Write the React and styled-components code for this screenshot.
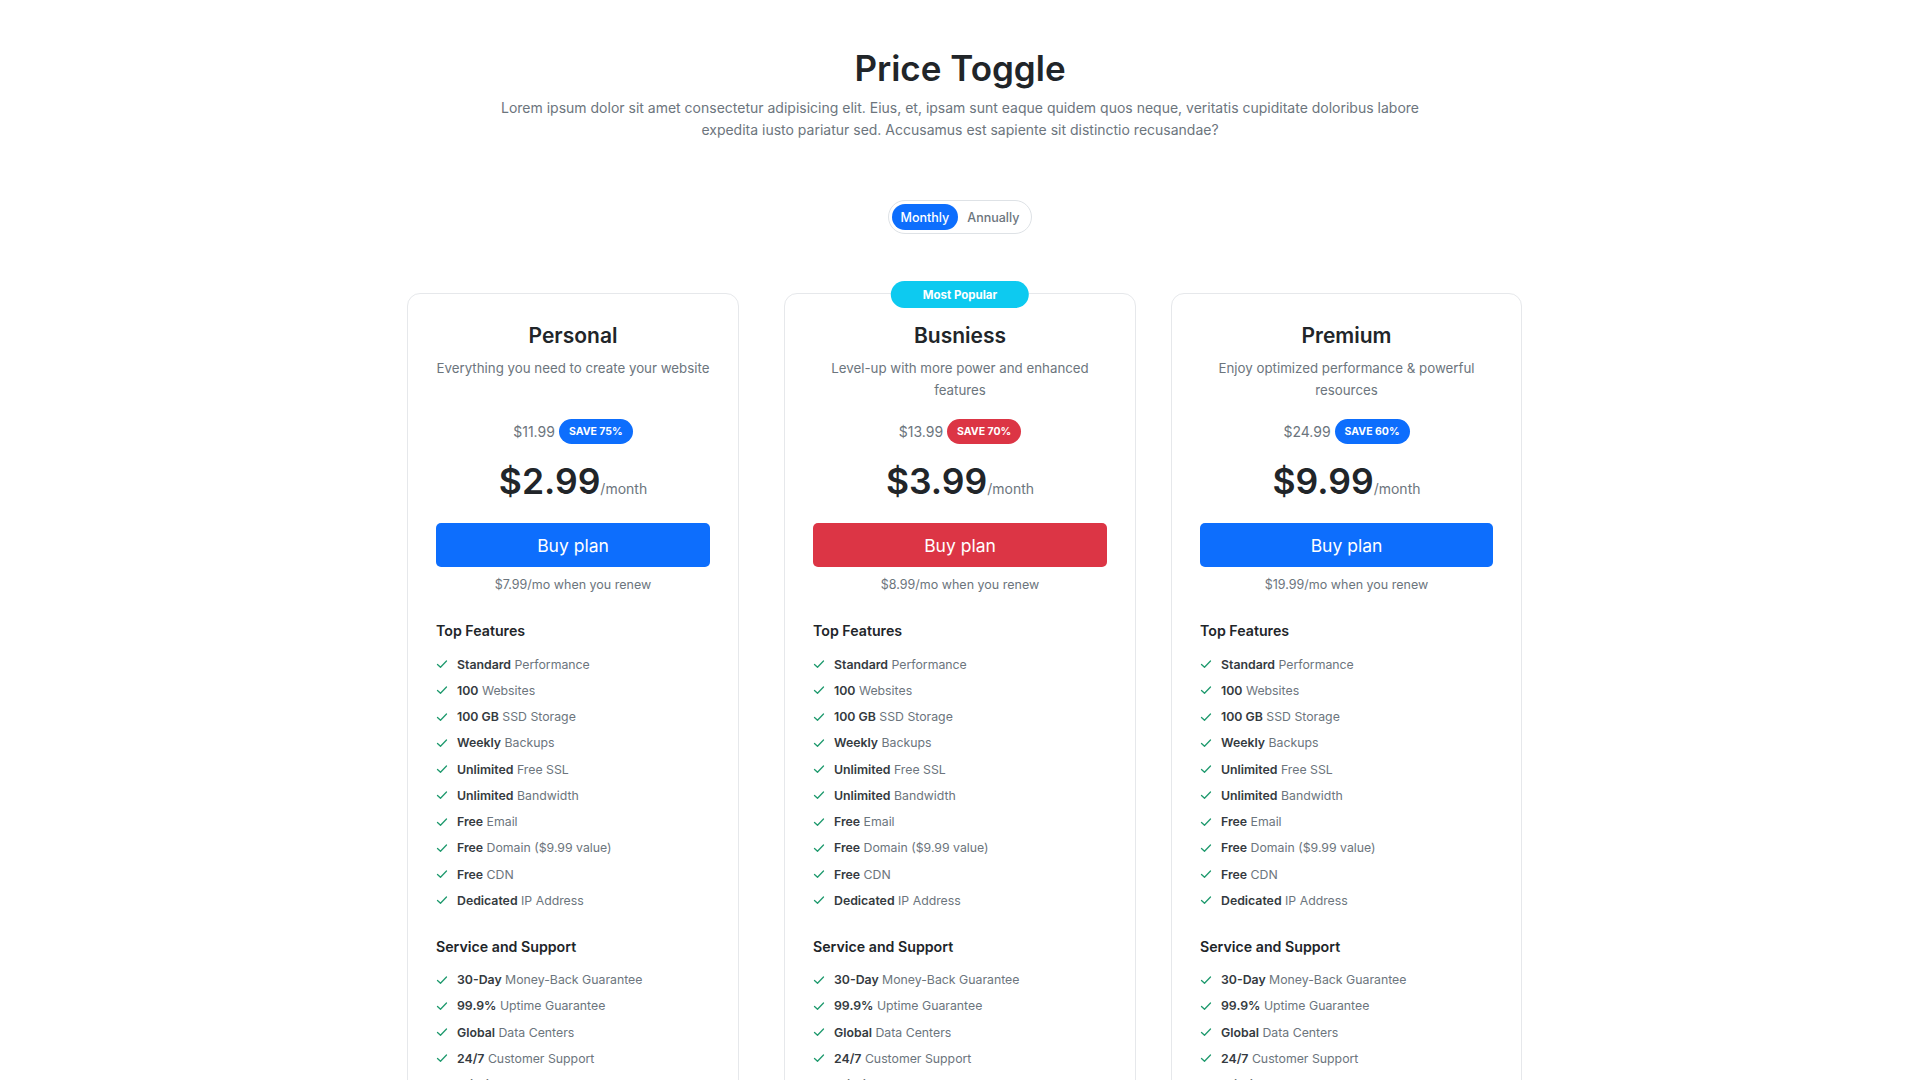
import React, { useState } from 'react'
import styled, { createGlobalStyle } from 'styled-components'

const GlobalStyle = createGlobalStyle`
    html {
        scrollbar-width: none;
    }
    html::-webkit-scrollbar {
        display: none;
    }
    body {
        margin: 0;
        background: #ffffff;
        font-family: 'Inter', 'Noto Sans', sans-serif;
        color: #212529;
    }
    * {
        box-sizing: border-box;
    }
`

const Page = styled.main`
    display: flex;
    flex-direction: column;
    align-items: center;
    padding: 47px 0 60px;
`

const Title = styled.h1`
    margin: 0;
    font-size: 35px;
    line-height: 43px;
    font-weight: 600;
    color: #212529;
`

const Lead = styled.p`
    margin: 7px 0 0;
    max-width: 960px;
    text-align: center;
    font-size: 14px;
    line-height: 22px;
    color: #6c757d;
`

const Toggle = styled.div`
    display: flex;
    margin-top: 59px;
    padding: 3px;
    border: 1px solid #dee2e6;
    border-radius: 999px;
    background: #fff;
`

const ToggleButton = styled.button`
    height: 26px;
    padding: 0 9px;
    border: 0;
    border-radius: 999px;
    font-family: inherit;
    font-size: 12.5px;
    font-weight: 500;
    cursor: pointer;
    background: ${p => (p.$active ? '#0d6efd' : 'transparent')};
    color: ${p => (p.$active ? '#ffffff' : '#6c757d')};
`

const Cards = styled.section`
    display: flex;
    justify-content: center;
    align-items: flex-start;
    margin-top: 59px;
    padding-left: 9px;
`

const Card = styled.article`
    position: relative;
    width: ${p => p.$width}px;
    margin: ${p => (p.$featured ? '0 35px 0 45px' : '0')};
    padding: 29px 28px 40px;
    border: 1px solid #e6e8eb;
    border-radius: 13px;
    background: #fff;
`

const Ribbon = styled.span`
    position: absolute;
    top: -13px;
    left: 50%;
    transform: translateX(-50%);
    height: 27px;
    padding: 0 32px;
    display: flex;
    align-items: center;
    border-radius: 999px;
    background: #0dcaf0;
    color: #fff;
    font-size: 11.5px;
    font-weight: 700;
    white-space: nowrap;
`

const PlanName = styled.h2`
    margin: 0;
    text-align: center;
    font-size: 21px;
    line-height: 26px;
    font-weight: 600;
    color: #212529;
`

const PlanText = styled.p`
    margin: 8px 0 0;
    min-height: 44px;
    text-align: center;
    font-size: 13.3px;
    line-height: 22px;
    color: #6c757d;
`

const OldPriceRow = styled.div`
    display: flex;
    justify-content: center;
    align-items: center;
    gap: 4px;
    margin-top: 18px;
    height: 25px;
`

const OldPrice = styled.span`
    font-size: 14px;
    color: #6c757d;
`

const SaveBadge = styled.span`
    height: 25px;
    padding: 0 10px;
    display: flex;
    align-items: center;
    border-radius: 999px;
    background: ${p => p.$color};
    color: #fff;
    font-size: 10.5px;
    font-weight: 700;
`

const PriceRow = styled.div`
    display: flex;
    justify-content: center;
    align-items: baseline;
    margin-top: 16px;
    height: 44px;
`

const Price = styled.span`
    font-size: 35.5px;
    line-height: 44px;
    font-weight: 600;
    color: #212529;
`

const Period = styled.span`
    font-size: 14px;
    color: #6c757d;
`

const BuyButton = styled.button`
    display: block;
    width: 100%;
    height: 44px;
    margin-top: 19px;
    border: 0;
    border-radius: 5px;
    background: ${p => p.$color};
    color: #fff;
    font-family: inherit;
    font-size: 17.5px;
    font-weight: 400;
    cursor: pointer;
`

const Renew = styled.p`
    margin: 9px 0 0;
    text-align: center;
    font-size: 12.5px;
    line-height: 18px;
    color: #6c757d;
`

const SectionTitle = styled.h3`
    margin: ${p => (p.$first ? '26px' : '22px')} 0 0;
    font-size: 14.2px;
    line-height: 22px;
    font-weight: 600;
    color: #212529;
`

const List = styled.ul`
    list-style: none;
    margin: 9px 0 0;
    padding: 0;
`

const Item = styled.li`
    display: flex;
    align-items: center;
    gap: 9px;
    height: 26.25px;
    font-size: 12.3px;
    color: #6c757d;

    b {
        font-weight: 600;
        color: #343a40;
    }
`

const CheckIcon = () => (
    <svg width="12" height="12" viewBox="0 0 12 12" fill="none">
        <path d="M1.5 6.5 4.5 9.3 10.5 3" stroke="#1f9a6e" strokeWidth="1.3" strokeLinecap="round" strokeLinejoin="round" />
    </svg>
)

const topFeatures = [
    ['Standard', 'Performance'],
    ['100', 'Websites'],
    ['100 GB', 'SSD Storage'],
    ['Weekly', 'Backups'],
    ['Unlimited', 'Free SSL'],
    ['Unlimited', 'Bandwidth'],
    ['Free', 'Email'],
    ['Free', 'Domain ($9.99 value)'],
    ['Free', 'CDN'],
    ['Dedicated', 'IP Address'],
]

const support = [
    ['30-Day', 'Money-Back Guarantee'],
    ['99.9%', 'Uptime Guarantee'],
    ['Global', 'Data Centers'],
    ['24/7', 'Customer Support'],
    ['Priority', 'Support'],
]

const plans = [
    { id: 'personal', name: 'Personal', text: 'Everything you need to create your website', old: '$11.99', save: 'SAVE 75%', price: '$2.99', renew: '$7.99/mo when you renew', color: '#0d6efd', width: 332 },
    { id: 'business', name: 'Busniess', text: 'Level-up with more power and enhanced features', old: '$13.99', save: 'SAVE 70%', price: '$3.99', renew: '$8.99/mo when you renew', color: '#dc3545', width: 352, featured: true },
    { id: 'premium', name: 'Premium', text: 'Enjoy optimized performance & powerful resources', old: '$24.99', save: 'SAVE 60%', price: '$9.99', renew: '$19.99/mo when you renew', color: '#0d6efd', width: 351 },
]

function FeatureList({ items }) {
    return (
        <List>
            {items.map(([strong, rest]) => (
                <Item key={strong + rest}>
                    <CheckIcon />
                    <span><b>{strong}</b> {rest}</span>
                </Item>
            ))}
        </List>
    )
}

export default function App() {
    const [billing, setBilling] = useState('monthly')

    return (
        <Page>
            <GlobalStyle />
            <Title>Price Toggle</Title>
            <Lead>
                Lorem ipsum dolor sit amet consectetur adipisicing elit. Eius, et, ipsam sunt eaque quidem quos neque, veritatis cupiditate doloribus labore expedita iusto pariatur sed. Accusamus est sapiente sit distinctio recusandae?
            </Lead>

            <Toggle>
                <ToggleButton $active={billing === 'monthly'} onClick={() => setBilling('monthly')}>Monthly</ToggleButton>
                <ToggleButton $active={billing === 'annually'} onClick={() => setBilling('annually')}>Annually</ToggleButton>
            </Toggle>

            <Cards>
                {plans.map(plan => (
                    <Card key={plan.id} $width={plan.width} $featured={plan.featured}>
                        {plan.featured && <Ribbon>Most Popular</Ribbon>}
                        <PlanName>{plan.name}</PlanName>
                        <PlanText>{plan.text}</PlanText>
                        <OldPriceRow>
                            <OldPrice>{plan.old}</OldPrice>
                            <SaveBadge $color={plan.color}>{plan.save}</SaveBadge>
                        </OldPriceRow>
                        <PriceRow>
                            <Price>{plan.price}</Price>
                            <Period>/month</Period>
                        </PriceRow>
                        <BuyButton $color={plan.color}>Buy plan</BuyButton>
                        <Renew>{plan.renew}</Renew>

                        <SectionTitle $first>Top Features</SectionTitle>
                        <FeatureList items={topFeatures} />

                        <SectionTitle>Service and Support</SectionTitle>
                        <FeatureList items={support} />
                    </Card>
                ))}
            </Cards>
        </Page>
    )
}
